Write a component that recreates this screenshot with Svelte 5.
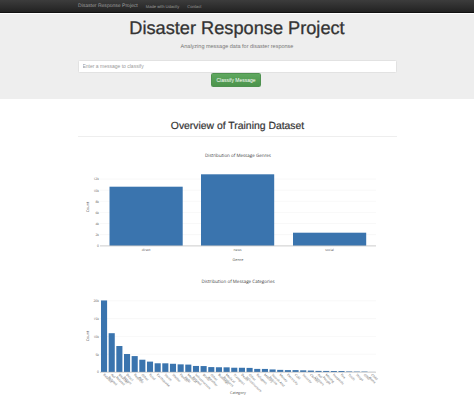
<script>
  const genres = [
    { name: 'direct', x: 109.5, top: 186.7 },
    { name: 'news', x: 201, top: 174.3 },
    { name: 'social', x: 293, top: 232.7 }
  ];
  const genreTicks = ['0', '2k', '4k', '6k', '8k', '10k', '12k'];
  const catTicks = ['0', '5k', '10k', '15k', '20k'];
  const cats = [
    ['Related', 20.1], ['Aid|Related', 10.9], ['Weather|Related', 7.3], ['Direct|Report', 5.05], ['Request', 4.47],
    ['Other|Aid', 3.45], ['Food', 2.92], ['Earthquake', 2.45], ['Storm', 2.44], ['Shelter', 2.31],
    ['Floods', 2.15], ['Medical|Help', 2.08], ['Infrastructure|Related', 1.7], ['Water', 1.67], ['Other|Weather', 1.38],
    ['Buildings', 1.33], ['Medical|Products', 1.31], ['Transport', 1.2], ['Death', 1.19], ['Other|Infrastructure', 1.15],
    ['Refugees', 0.87], ['Military', 0.86], ['Search And|Rescue', 0.72], ['Money', 0.6], ['Electricity', 0.53],
    ['Cold', 0.53], ['Security', 0.47], ['Clothes', 0.4], ['Aid|Centers', 0.31], ['Missing|People', 0.3],
    ['Hospitals', 0.28], ['Fire', 0.28], ['Tools', 0.16], ['Shops', 0.12], ['Offer', 0.12], ['Child|Alone', 0.02]
  ];
  const unit2 = 3.56;
  const step = 7.66;
</script>

<nav class="navbar">
  <div class="nav-inner">
    <span class="brand">Disaster Response Project</span>
    <span class="link">Made with Udacity</span>
    <span class="link">Contact</span>
  </div>
</nav>

<header class="jumbotron">
  <h1>Disaster Response Project</h1>
  <p>Analyzing message data for disaster response</p>
  <div class="form">
    <input type="text" placeholder="Enter a message to classify" />
    <button type="button">Classify Message</button>
  </div>
</header>

<main class="container">
  <h2>Overview of Training Dataset</h2>
  <svg class="charts" width="474" height="275" viewBox="0 140 474 275">
    <text class="title" x="238" y="156.5">Distribution of Message Genres</text>
    {#each genreTicks as t, i}
      {#if i > 0}<line class="grid" x1="100" x2="376" y1={245.7 - i * 11.1} y2={245.7 - i * 11.1} />{/if}
      <text class="tick end" x="99" y={247 - i * 11.1}>{t}</text>
    {/each}
    {#each genres as g}
      <rect class="bar" x={g.x} y={g.top} width="73.2" height={245.7 - g.top} />
      <text class="tick" x={g.x + 36.6} y="250.5">{g.name}</text>
    {/each}
    <line class="axis" x1="100" x2="376" y1="245.9" y2="245.9" />
    <text class="label" x="238" y="260.5">Genre</text>
    <text class="label" transform="translate(89 207) rotate(-90)">Count</text>

    <text class="title" x="238" y="282.5">Distribution of Message Categories</text>
    {#each catTicks as t, i}
      {#if i > 0}<line class="grid" x1="100" x2="376" y1={372 - i * 17.8} y2={372 - i * 17.8} />{/if}
      <text class="tick end" x="99" y={373.3 - i * 17.8}>{t}</text>
    {/each}
    {#each cats as c, i}
      <rect class="bar" x={101 + i * step} y={372 - c[1] * unit2} width="6.1" height={c[1] * unit2} />
      <text class="cat" transform="translate({103 + i * step} 375) rotate(45)">
        {#each c[0].split('|') as part, j}
          <tspan x="0" dy={j ? 3.8 : 0}>{part}</tspan>
        {/each}
      </text>
    {/each}
    <line class="axis" x1="100" x2="376" y1="372.2" y2="372.2" />
    <text class="label" x="238" y="394">Category</text>
    <text class="label" transform="translate(89 336) rotate(-90)">Count</text>
  </svg>
</main>

<style>
  :global(body) {
    margin: 0;
    background: #fff;
    font-family: "Liberation Sans", Arial, sans-serif;
    overflow: hidden;
    text-rendering: geometricPrecision;
  }
  .navbar {
    height: 13px;
    background: linear-gradient(#3c3c3c, #222);
    border-bottom: 1px solid #111;
    box-sizing: border-box;
  }
  .nav-inner {
    display: flex;
    align-items: center;
    height: 12px;
    padding-left: 78px;
    gap: 8px;
    color: #9d9d9d;
    font-size: 4.1px;
  }
  .brand {
    font-size: 5.05px;
  }
  .jumbotron {
    margin-top: 1px;
    height: 85px;
    background: #eee;
    display: flex;
    flex-direction: column;
    align-items: center;
    color: #333;
  }
  h1 {
    margin: 3px 0 0;
    font-size: 18.2px;
    line-height: 22px;
    font-weight: 400;
    -webkit-text-stroke: 0.3px #333;
  }
  p {
    margin: 4px 0 0;
    font-size: 5.5px;
    line-height: 8px;
    color: #777;
  }
  .form {
    margin-top: 9px;
    width: 319px;
    display: flex;
    flex-direction: column;
    align-items: center;
  }
  input {
    width: 100%;
    height: 12.5px;
    box-sizing: border-box;
    border: 1px solid #e2e2e2;
    border-radius: 1.5px;
    padding: 0 4px;
    background: #fff;
    font-family: inherit;
    font-size: 5px;
  }
  input::placeholder {
    color: #999;
  }
  button {
    width: 50px;
    height: 14px;
    margin: 0;
    padding: 0;
    border: 1px solid #4f9150;
    border-radius: 1.5px;
    background: linear-gradient(#5fa85f, #4c944c);
    color: #fff;
    font-family: inherit;
    font-size: 5px;
    transform: translateX(-1px);
  }
  .container {
    width: 319px;
    margin: 0 auto 0 78px;
  }
  h2 {
    margin: 20px 0 0;
    height: 18px;
    line-height: 15px;
    box-sizing: border-box;
    text-align: center;
    font-size: 10.4px;
    font-weight: 400;
    -webkit-text-stroke: 0.2px #333;
    color: #333;
    border-bottom: 1px solid #eee;
  }
  .charts {
    display: block;
    margin: 3px 0 0 -78px;
    font-family: "Open Sans", "Liberation Sans", sans-serif;
  }
  .title {
    font-size: 4.5px;
    fill: #444;
    text-anchor: middle;
  }
  .label {
    font-size: 3.8px;
    fill: #555;
    text-anchor: middle;
  }
  .tick {
    font-size: 3.3px;
    fill: #555;
    text-anchor: middle;
  }
  .tick.end {
    text-anchor: end;
  }
  .cat {
    font-size: 3.2px;
    fill: #666;
  }
  .grid {
    stroke: #f1f1f1;
    stroke-width: 0.5;
  }
  .axis {
    stroke: #aaa;
    stroke-width: 0.6;
  }
  .bar {
    fill: #3a74ae;
  }
</style>
